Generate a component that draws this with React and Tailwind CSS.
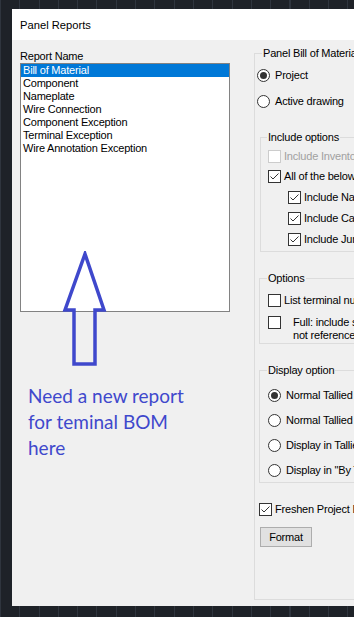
import React from 'react';

const reports = [
    'Bill of Material',
    'Component',
    'Nameplate',
    'Wire Connection',
    'Component Exception',
    'Terminal Exception',
    'Wire Annotation Exception',
];

function Radio({ label, checked, className = '' }) {
    return (
        <div className={`flex items-center h-[13px] gap-[5px] ${className}`}>
            <span className="w-[13px] h-[13px] shrink-0 rounded-full border border-[#333333] bg-white flex items-center justify-center">
                {checked && <span className="w-[7px] h-[7px] rounded-full bg-[#333333]" />}
            </span>
            <span className="whitespace-nowrap leading-[13px]">{label}</span>
        </div>
    );
}

function Check({ label, checked, disabled, className = '' }) {
    return (
        <div className={`flex items-center h-[13px] gap-[3px] ${className}`}>
            <span
                className={`w-[13px] h-[13px] shrink-0 border bg-white ${
                    disabled ? 'border-[#cccccc]' : 'border-[#333333]'
                }`}
            >
                {checked && (
                    <svg width="11" height="11" viewBox="0 0 11 11">
                        <path d="M1.5 5.5 L4 8 L9.5 2.5" fill="none" stroke="#333333" strokeWidth="1" />
                    </svg>
                )}
            </span>
            <span className={`whitespace-nowrap leading-[13px] ${disabled ? 'text-[#a0a0a0]' : ''}`}>{label}</span>
        </div>
    );
}

export default function App() {
    return (
        <div className="w-[354px] h-[617px] overflow-hidden bg-[#1e2228] bg-[repeating-linear-gradient(90deg,#2f353e_0_1px,transparent_1px_19.3px)] pt-[9px] pl-[12px] font-['Liberation_Sans',Arial,sans-serif] text-[11px] tracking-[-0.2px] text-black">
            <div className="w-[640px] h-[597px] flex flex-col">
                <div className="h-[31px] bg-white flex items-center pl-[8px] pt-[2px] text-[11.2px] tracking-normal">
                    Panel Reports
                </div>

                <div className="flex-1 bg-[#f0f0f0] flex pl-[8px]">
                    <div className="w-[210px] shrink-0 pt-[10px] relative">
                        <div className="h-[13px] leading-[13px]">Report Name</div>
                        <div className="h-[249px] border border-[#828282] bg-white">
                            {reports.map((r, i) => (
                                <div
                                    key={r}
                                    className={`h-[13px] leading-[13px] pl-[2px] whitespace-nowrap ${
                                        i === 0 ? 'bg-[#0078d7] text-white' : ''
                                    }`}
                                >
                                    {r}
                                </div>
                            ))}
                        </div>

                        {/* annotation arrow drawn over the list */}
                        <svg
                            className="absolute left-[42px] top-[211px]"
                            width="48"
                            height="120"
                            viewBox="0 0 48 120"
                        >
                            <polygon
                                points="23,3 42,59 33,59 33,113 12,113 12,59 3,59"
                                fill="none"
                                stroke="#3f48cc"
                                strokeWidth="3.5"
                                strokeLinejoin="miter"
                            />
                        </svg>

                        <div className="mt-[71px] pl-[8px] font-['Lato',sans-serif] text-[19px] leading-[26px] tracking-normal text-[#3f48cc]">
                            Need a new report
                            <br />
                            for teminal BOM
                            <br />
                            here
                        </div>
                    </div>

                    <div className="ml-[24px]">
                        <fieldset className="mt-[7px] h-[553px] w-[360px] border border-[#dcdcdc]">
                            <legend className="ml-[7px] px-[1px] leading-[13px]">Panel Bill of Material</legend>

                            <Radio label="Project" checked className="mt-[9px] pl-[2px]" />
                            <Radio label="Active drawing" className="mt-[13px] pl-[2px]" />

                            <fieldset className="mt-[23px] ml-[5px] h-[121px] border border-[#dcdcdc]">
                                <legend className="ml-[6px] px-[1px] leading-[13px]">Include options</legend>
                                <Check label="Include Inventory Items" disabled className="mt-[6px] pl-[7px]" />
                                <Check label="All of the below" checked className="mt-[7px] pl-[7px]" />
                                <Check label="Include Nameplates" checked className="mt-[8px] pl-[27px]" />
                                <Check label="Include Catalog Assemblies" checked className="mt-[8px] pl-[27px]" />
                                <Check label="Include Jumpers" checked className="mt-[8px] pl-[27px]" />
                            </fieldset>

                            <fieldset className="mt-[20px] ml-[4px] h-[72px] border border-[#dcdcdc]">
                                <legend className="ml-[7px] px-[1px] leading-[13px]">Options</legend>
                                <Check label="List terminal numbers" className="mt-[9px] pl-[8px]" />
                                <div className="mt-[9px] pl-[8px] flex items-start gap-[12px]">
                                    <span className="w-[13px] h-[13px] shrink-0 border border-[#333333] bg-white" />
                                    <span className="leading-[13px] whitespace-nowrap">
                                        Full: include subassemblies
                                        <br />
                                        not referenced
                                    </span>
                                </div>
                            </fieldset>

                            <fieldset className="mt-[20px] ml-[4px] h-[119px] border border-[#dcdcdc]">
                                <legend className="ml-[7px] px-[1px] leading-[13px]">Display option</legend>
                                <Radio label="Normal Tallied" checked className="mt-[12px] pl-[8px] gap-[3px]" />
                                <Radio label="Normal Tallied by Location" className="mt-[12px] pl-[8px] gap-[3px]" />
                                <Radio label="Display in Tallied format" className="mt-[12px] pl-[8px] gap-[3px]" />
                                <Radio label={'Display in "By Type" format'} className="mt-[12px] pl-[8px] gap-[3px]" />
                            </fieldset>

                            <Check label="Freshen Project Database" checked className="mt-[20px] pl-[4px]" />

                            <button className="mt-[11px] ml-[5px] w-[52px] h-[20px] bg-[#e1e1e1] border border-[#adadad] leading-[18px] text-center">
                                Format
                            </button>
                        </fieldset>
                    </div>
                </div>
            </div>
        </div>
    );
}
